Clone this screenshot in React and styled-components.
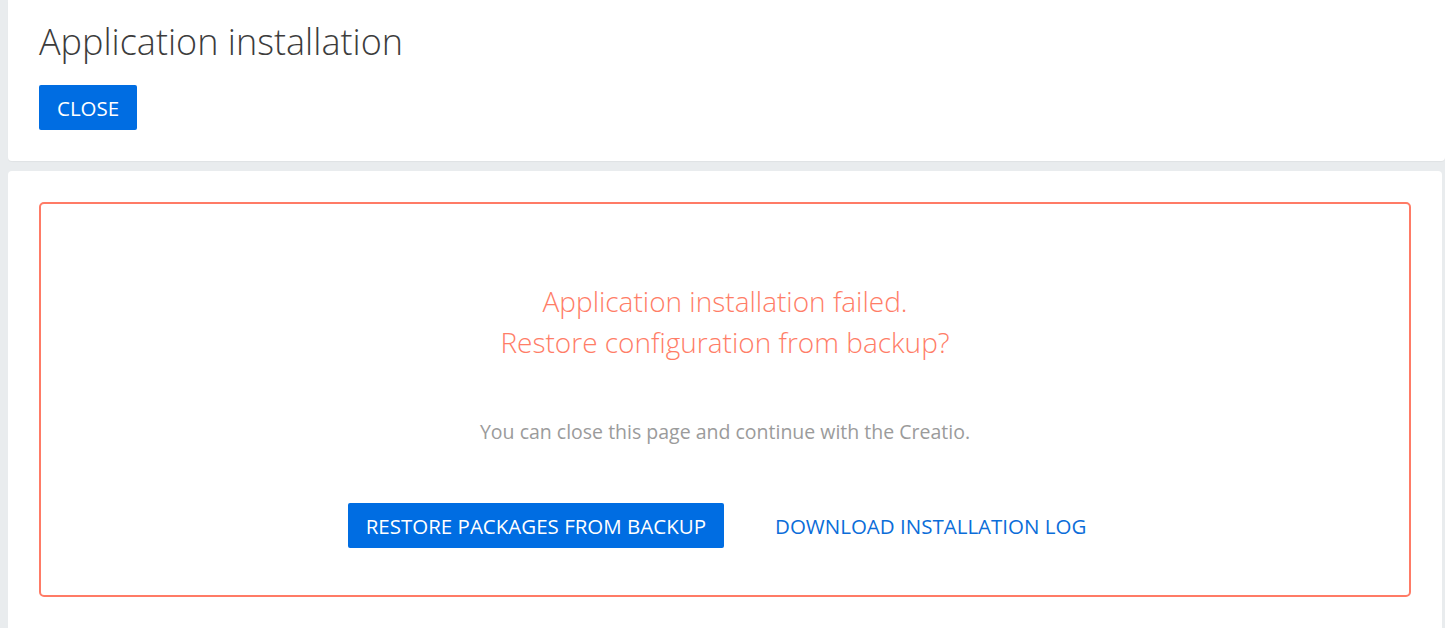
import styled, { createGlobalStyle } from "styled-components";

const GlobalStyle = createGlobalStyle`
  html, body {
    margin: 0;
    padding: 0;
    background: #e9ecee;
    font-family: "Open Sans", "Liberation Sans", sans-serif;
  }
`;

const Page = styled.div`
  padding: 0 0 0 8px;
  display: flex;
  flex-direction: column;
  gap: 10px;
`;

const HeaderCard = styled.div`
  background: #ffffff;
  border-radius: 0 0 4px 4px;
  padding: 19px 31px 31px;
  height: 161px;
  box-sizing: border-box;
  box-shadow: 0 1px 1px rgba(0, 0, 0, 0.04);
`;

const Title = styled.h1`
  margin: 0 0 20px;
  font-weight: 300;
  font-size: 36px;
  line-height: 46px;
  color: #3c3c3c;
`;

const PrimaryButton = styled.button`
  font-family: "Open Sans", "Liberation Sans", sans-serif;
  background: #006de2;
  color: #ffffff;
  border: none;
  border-radius: 2px;
  height: 45px;
  padding: 0 18px;
  font-size: 20.5px;
  text-transform: uppercase;
  cursor: pointer;
`;

const LinkButton = styled.button`
  font-family: "Open Sans", "Liberation Sans", sans-serif;
  background: transparent;
  color: #0b6dd9;
  border: none;
  height: 45px;
  padding: 0 16px;
  font-size: 20.5px;
  text-transform: uppercase;
  cursor: pointer;
`;

const BodyCard = styled.div`
  background: #ffffff;
  border-radius: 4px;
  margin-right: 3px;
  padding: 31px 31px 40px;
`;

const ErrorBox = styled.div`
  border: 2px solid #ff7b66;
  border-radius: 5px;
  padding: 77px 20px 47px;
  display: flex;
  flex-direction: column;
  align-items: center;
  text-align: center;
`;

const ErrorText = styled.div`
  color: #ff7d67;
  font-weight: 300;
  font-size: 28px;
  line-height: 41px;
`;

const Hint = styled.div`
  margin-top: 56px;
  color: #9b9b9b;
  font-size: 19.5px;
  line-height: 26px;
`;

const Actions = styled.div`
  margin-top: 58px;
  display: flex;
  gap: 35px;
  align-items: center;
`;

export default function App() {
  return (
    <>
      <GlobalStyle />
      <Page>
        <HeaderCard>
          <Title>Application installation</Title>
          <PrimaryButton>Close</PrimaryButton>
        </HeaderCard>
        <BodyCard>
          <ErrorBox>
            <ErrorText>
              Application installation failed.
              <br />
              Restore configuration from backup?
            </ErrorText>
            <Hint>You can close this page and continue with the Creatio.</Hint>
            <Actions>
              <PrimaryButton>Restore packages from backup</PrimaryButton>
              <LinkButton>Download installation log</LinkButton>
            </Actions>
          </ErrorBox>
        </BodyCard>
      </Page>
    </>
  );
}
